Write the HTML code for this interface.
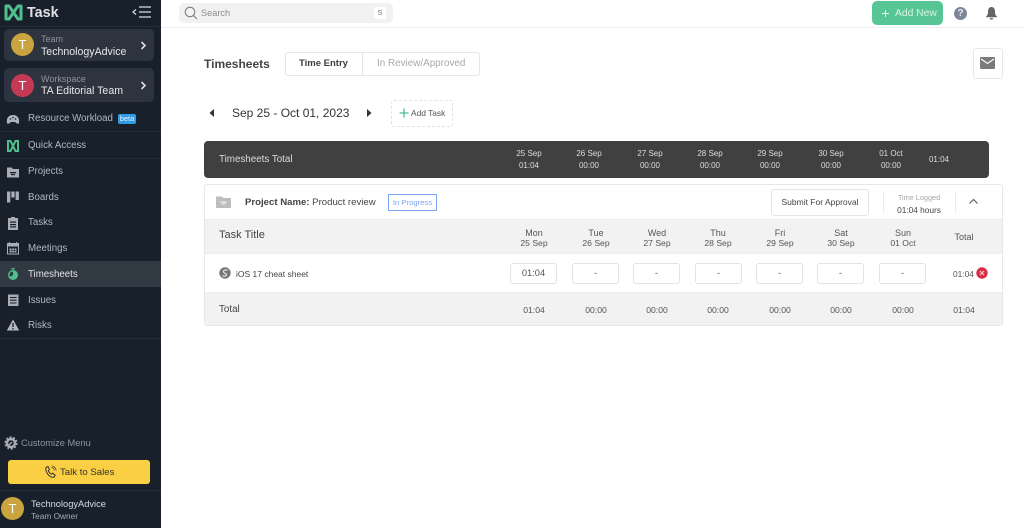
<!DOCTYPE html>
<html lang="en">
<head>
<meta charset="utf-8">
<title>Timesheets</title>
<style>
html,body{margin:0;padding:0}
body{width:1024px;height:528px;overflow:hidden;position:relative;background:#fff;font-family:"Liberation Sans",sans-serif;color:#3c3c3c;filter:blur(.3px)}
.a{position:absolute;white-space:nowrap}
.t{position:absolute;white-space:nowrap;line-height:12px}
.c{position:absolute;white-space:nowrap;transform:translateX(-50%);line-height:12px;text-align:center}
.side{position:absolute;left:0;top:0;width:161px;height:528px;background:#18202c}
.sep{position:absolute;left:0;width:161px;height:1px;background:#232c39}
.box{position:absolute;left:4px;width:150px;background:#2d343f;border-radius:5px}
.av{position:absolute;width:23px;height:23px;border-radius:50%;color:#fff;font-size:13px;line-height:23px;text-align:center}
.m{position:absolute;left:28px;font-size:9.700px;line-height:12px;color:#b3b8bf;white-space:nowrap}
.i{position:absolute;left:6px;width:14px;height:14px}
.inp{position:absolute;top:263px;width:45px;height:19px;border:1px solid #e3e3e3;border-radius:3px;background:#fff;text-align:center;font-size:9px;line-height:19px;color:#555}
.g{background:#f2f2f2;position:absolute;left:205px;width:797px}
.w{color:#ddd;font-size:8px}
.d{font-size:8.600px;color:#555}
svg{display:block}
</style>
</head>
<body>
<div class="side"></div>
<svg class="a" style="left:4px;top:4px" width="19" height="17" viewBox="0 0 19 17"><path d="M2 2h3l9 13h3V2h-3L5 15H2z" fill="none" stroke="#4fc08d" stroke-width="3" stroke-linejoin="round"/></svg>
<div class="t" style="left:27px;top:5px;font-size:14.300px;line-height:17px;font-weight:bold;color:#dfe2e5">Task</div>
<svg class="a" style="left:131px;top:6px" width="21" height="12" viewBox="0 0 21 12"><path d="M5 3.500L2 6l3 2.500" fill="none" stroke="#ddd" stroke-width="1.200"/><path d="M8 1h12M8 6h12M8 11h12" stroke="#ddd" stroke-width="1.200"/></svg>
<div class="sep" style="top:26px"></div>

<div class="box" style="top:29px;height:32px"></div>
<div class="av" style="left:11px;top:33px;background:#c9a43f">T</div>
<div class="t" style="left:41px;top:33px;font-size:9px;color:#8e949c">Team</div>
<div class="t" style="left:41px;top:45.500px;font-size:10.600px;color:#e6e8ea">TechnologyAdvice</div>
<svg class="a" style="left:140px;top:41px" width="7" height="9" viewBox="0 0 7 9"><path d="M1.500 1l3.500 3.500L1.500 8" fill="none" stroke="#ddd" stroke-width="1.600"/></svg>

<div class="box" style="top:68px;height:34px"></div>
<div class="av" style="left:11px;top:74px;background:#c43a55">T</div>
<div class="t" style="left:41px;top:72.500px;font-size:9px;color:#8e949c">Workspace</div>
<div class="t" style="left:41px;top:84.500px;font-size:10.600px;color:#e6e8ea">TA Editorial Team</div>
<svg class="a" style="left:140px;top:81px" width="7" height="9" viewBox="0 0 7 9"><path d="M1.500 1l3.500 3.500L1.500 8" fill="none" stroke="#ddd" stroke-width="1.600"/></svg>

<svg class="i" style="top:112px" viewBox="0 0 14 14"><path d="M1 11C0 6 3 3 7 3s7 3 6 8c-.3 1-1.500 1-2.200.4L9 10H5l-1.800 1.400C2.500 12 1.300 12 1 11z" fill="#aeb3b9"/><circle cx="4.500" cy="7" r=".8" fill="#18202c"/><circle cx="7" cy="5.500" r=".8" fill="#18202c"/><circle cx="9.500" cy="7" r=".8" fill="#18202c"/></svg>
<div class="m" style="top:113px">Resource Workload</div>
<div class="a" style="left:118px;top:114px;width:18px;height:10px;background:#2f9be6;border-radius:2px;color:#e8f4ff;font-size:7.500px;line-height:10px;text-align:center">beta</div>
<div class="sep" style="top:131px"></div>

<svg class="i" style="top:139px" viewBox="0 0 14 14"><path d="M2 2h2.500l5 10H12V2H9.500l-5 10H2z" fill="none" stroke="#4fc08d" stroke-width="2"/></svg>
<div class="m" style="top:140px">Quick Access</div>
<div class="sep" style="top:158px"></div>

<svg class="i" style="top:165px" viewBox="0 0 14 14"><path d="M1 2.500h4.500L7 4h6v8.500H1z" fill="#a9aeb5"/><rect x="4" y="7" width="6" height="1.300" fill="#18202c"/><rect x="5" y="9" width="4" height="1.200" fill="#18202c"/></svg>
<div class="m" style="top:166px">Projects</div>

<svg class="i" style="top:190px" viewBox="0 0 14 14"><rect x="1" y="1.500" width="3.300" height="11" fill="#a9aeb5"/><rect x="5.300" y="1.500" width="3.300" height="6" fill="#a9aeb5"/><rect x="9.600" y="1.500" width="3.300" height="8.500" fill="#a9aeb5"/></svg>
<div class="m" style="top:191.500px">Boards</div>

<svg class="i" style="top:216px" viewBox="0 0 14 14"><path d="M2 2h3V1h4v1h3v12H2z" fill="#a9aeb5"/><rect x="4" y="5.500" width="6" height="1.200" fill="#18202c"/><rect x="4" y="8" width="6" height="1.200" fill="#18202c"/><rect x="4" y="10.300" width="6" height="1.200" fill="#18202c"/></svg>
<div class="m" style="top:217px">Tasks</div>

<svg class="i" style="top:241px" viewBox="0 0 14 14"><path d="M1.500 2.500h11v10.500h-11z" fill="none" stroke="#a9aeb5" stroke-width="1"/><rect x="1.500" y="2.500" width="11" height="3" fill="#a9aeb5"/><path d="M3.500 1v2.500M10.500 1v2.500" stroke="#a9aeb5"/><path d="M3.500 7.500h7v4h-7z" fill="#a9aeb5"/><path d="M3.500 9.500h7M6 7.500v4M8.300 7.500v4" stroke="#18202c" stroke-width=".6"/></svg>
<div class="m" style="top:243px">Meetings</div>

<div class="a" style="left:0;top:261px;width:161px;height:26px;background:#313942"></div>
<svg class="i" style="top:267px" viewBox="0 0 14 14"><circle cx="7" cy="8" r="5" fill="#4fc08d"/><rect x="5.500" y="1" width="3" height="1.500" fill="#4fc08d"/><path d="M7 8V4.500A3.500 3.500 0 0 0 4 9.800z" fill="#2a3a3a"/></svg>
<div class="m" style="top:268.500px;color:#e2e4e7">Timesheets</div>

<svg class="i" style="top:293px" viewBox="0 0 14 14"><rect x="2" y="1.500" width="10.500" height="11.500" fill="#a9aeb5"/><path d="M4 4.500h6.500M4 7.200h6.500M4 10h6.500" stroke="#18202c" stroke-width="1.100"/></svg>
<div class="m" style="top:294.500px">Issues</div>

<svg class="i" style="top:318px" viewBox="0 0 14 14"><path d="M7 1.500l6.200 11H.8z" fill="#b5b9bf"/><rect x="6.300" y="5" width="1.400" height="4" fill="#18202c"/><rect x="6.300" y="10" width="1.400" height="1.400" fill="#18202c"/></svg>
<div class="m" style="top:320px">Risks</div>
<div class="sep" style="top:338px"></div>

<svg class="a" style="left:4px;top:436px" width="14" height="14" viewBox="0 0 14 14"><circle cx="7" cy="7" r="4" fill="none" stroke="#a9aeb5" stroke-width="2.400"/><circle cx="7" cy="7" r="5.700" fill="none" stroke="#a9aeb5" stroke-width="1.800" stroke-dasharray="2 1.600"/><path d="M5 9l3-3" stroke="#a9aeb5" stroke-width="1.300"/></svg>
<div class="t" style="left:21px;top:437px;font-size:9.300px;color:#8f959c">Customize Menu</div>
<div class="a" style="left:8px;top:460px;width:142px;height:24px;background:#fbcf44;border-radius:3px"></div>
<svg class="a" style="left:44px;top:465px" width="13" height="14" viewBox="0 0 13 14"><path d="M2 2.500L4 1.500l1.500 3-1.200 1c.5 1.500 1.700 3 3.200 3.700l1.200-1 2.500 2-1.200 2C6 13 1 7.500 2 2.500z" fill="none" stroke="#333" stroke-width="1"/><path d="M7.500 2.500a3.500 3.500 0 0 1 3 3M7.500.8a5 5 0 0 1 4.700 4.700" fill="none" stroke="#333" stroke-width=".7"/></svg>
<div class="t" style="left:60px;top:466.500px;font-size:9.600px;color:#333">Talk to Sales</div>
<div class="sep" style="top:490px"></div>
<div class="av" style="left:1px;top:497px;background:#c9a43f">T</div>
<div class="t" style="left:31px;top:498px;font-size:9.300px;color:#d9dce0">TechnologyAdvice</div>
<div class="t" style="left:31px;top:510px;font-size:8.300px;color:#a5aab1">Team Owner</div>

<div class="a" style="left:161px;top:27px;width:863px;height:1px;background:#efefef"></div>
<div class="a" style="left:179px;top:3px;width:214px;height:20px;background:#f1f1f1;border-radius:5px"></div>
<svg class="a" style="left:184px;top:6px" width="14" height="14" viewBox="0 0 14 14"><circle cx="6" cy="6" r="4.800" fill="none" stroke="#6f7883" stroke-width="1"/><path d="M9.500 9.500l3.500 3.500" stroke="#6f7883" stroke-width="1"/></svg>
<div class="t" style="left:201px;top:7px;font-size:9.200px;color:#8e8e8e">Search</div>
<div class="a" style="left:374px;top:7px;width:12px;height:12px;background:#fff;border-radius:2px;font-size:7.500px;line-height:12px;text-align:center;color:#777">S</div>

<div class="a" style="left:872px;top:1px;width:71px;height:24px;background:#57c594;border-radius:5px"></div>
<svg class="a" style="left:881px;top:9px" width="9" height="9" viewBox="0 0 9 9"><path d="M4.500 1v7M1 4.500h7" stroke="#e8f8f0" stroke-width="1"/></svg>
<div class="t" style="left:895px;top:7.500px;font-size:10.300px;color:#d9f3e6">Add New</div>
<div class="a" style="left:954px;top:7px;width:13px;height:13px;border-radius:50%;background:#7d8896;color:#e8eaed;font-size:10px;font-weight:bold;line-height:13px;text-align:center">?</div>
<svg class="a" style="left:985px;top:6px" width="13" height="14" viewBox="0 0 13 14"><path d="M6.500 1C4 1 3 3 3 5.500 3 8 2.500 9.500 1 10.500v.8h11v-.8C10.500 9.500 10 8 10 5.500 10 3 9 1 6.500 1z" fill="#666"/><rect x="5" y="12" width="3" height="1.500" rx=".7" fill="#666"/></svg>

<div class="a" style="left:973px;top:48px;width:28px;height:29px;border:1px solid #e8e8e8;border-radius:3px"></div>
<svg class="a" style="left:980px;top:57px" width="15" height="12" viewBox="0 0 15 12"><rect width="15" height="12" rx="1" fill="#7b7b7b"/><path d="M1 2l6.500 4.500L14 2" fill="none" stroke="#fff" stroke-width="1.100"/></svg>

<div class="t" style="left:204px;top:58px;font-size:12px;line-height:13px;font-weight:bold;color:#444">Timesheets</div>
<div class="a" style="left:285px;top:52px;width:193px;height:22px;border:1px solid #e6e6e6;border-radius:3px"></div>
<div class="a" style="left:362px;top:53px;width:1px;height:22px;background:#e6e6e6"></div>
<div class="t" style="left:299px;top:57.500px;font-size:9.500px;font-weight:bold;color:#3c3c3c">Time Entry</div>
<div class="t" style="left:377px;top:57.500px;font-size:9.900px;color:#a8a8a8">In Review/Approved</div>

<svg class="a" style="left:209px;top:109px" width="6" height="8" viewBox="0 0 6 8"><path d="M5 0v8L.5 4z" fill="#333"/></svg>
<div class="t" style="left:232px;top:106px;font-size:12px;line-height:14px;color:#333">Sep 25 - Oct 01, 2023</div>
<svg class="a" style="left:366px;top:109px" width="6" height="8" viewBox="0 0 6 8"><path d="M1 0v8l4.500-4z" fill="#333"/></svg>
<div class="a" style="left:391px;top:100px;width:60px;height:25px;border:1px dashed #e2e2e2;border-radius:3px"></div>
<svg class="a" style="left:399px;top:108px" width="10" height="10" viewBox="0 0 10 10"><path d="M5 .5v9M.5 5h9" stroke="#4fc08d" stroke-width="1.300"/></svg>
<div class="t" style="left:411px;top:107px;font-size:8.400px;color:#555">Add Task</div>

<div class="a" style="left:204px;top:141px;width:785px;height:37px;background:#404040;border-radius:4px"></div>
<div class="t" style="left:219px;top:154px;font-size:9.800px;color:#dcdcdc">Timesheets Total</div>
<div class="c w" style="left:529px;top:148px">25 Sep</div><div class="c w" style="left:529px;top:159.500px">01:04</div>
<div class="c w" style="left:589px;top:148px">26 Sep</div><div class="c w" style="left:589px;top:159.500px">00:00</div>
<div class="c w" style="left:650px;top:148px">27 Sep</div><div class="c w" style="left:650px;top:159.500px">00:00</div>
<div class="c w" style="left:710px;top:148px">28 Sep</div><div class="c w" style="left:710px;top:159.500px">00:00</div>
<div class="c w" style="left:770px;top:148px">29 Sep</div><div class="c w" style="left:770px;top:159.500px">00:00</div>
<div class="c w" style="left:831px;top:148px">30 Sep</div><div class="c w" style="left:831px;top:159.500px">00:00</div>
<div class="c w" style="left:891px;top:148px">01 Oct</div><div class="c w" style="left:891px;top:159.500px">00:00</div>
<div class="c w" style="left:939px;top:154px">01:04</div>

<div class="g" style="top:219px;height:34px"></div>
<div class="a" style="left:205px;top:219px;width:797px;height:1px;background:#ebebeb"></div>
<div class="a" style="left:205px;top:253px;width:797px;height:1px;background:#ebebeb"></div>
<div class="g" style="top:293px;height:32px;border-radius:0 0 3px 3px"></div>
<div class="a" style="left:205px;top:292px;width:797px;height:1px;background:#ebebeb"></div>
<div class="a" style="left:204px;top:184px;width:797px;height:139.500px;border:1px solid #e8e8e8;border-radius:3px"></div>

<svg class="a" style="left:216px;top:195px" width="15" height="13" viewBox="0 0 15 13"><path d="M0 1.500h6L7.500 3H15v10H0z" fill="#bdbdbd"/><rect x="4.500" y="6.500" width="6" height="1.200" fill="#f4f4f4"/><rect x="5.500" y="8.500" width="4" height="1" fill="#f4f4f4"/></svg>
<div class="t" style="left:245px;top:196.500px;font-size:9.600px;color:#444"><b>Project Name:</b> Product review</div>
<div class="a" style="left:388px;top:194px;width:47px;height:15px;border:1px solid #7da4f5;font-size:7.700px;line-height:15px;text-align:center;color:#7da4f5">In Progress</div>
<div class="a" style="left:771px;top:189px;width:96px;height:25px;border:1px solid #e6e6e6;border-radius:3px;font-size:8.500px;line-height:25px;text-align:center;color:#444">Submit For Approval</div>
<div class="a" style="left:883px;top:191px;width:1px;height:22px;background:#ececec"></div>
<div class="c" style="left:919px;top:192px;font-size:7.300px;color:#a5a5a5">Time Logged</div>
<div class="c" style="left:919px;top:203.500px;font-size:8.300px;color:#444">01:04 hours</div>
<div class="a" style="left:955px;top:191px;width:1px;height:22px;background:#ececec"></div>
<svg class="a" style="left:968px;top:198px" width="11" height="7" viewBox="0 0 11 7"><path d="M1.500 5.500l4-4 4 4" fill="none" stroke="#555" stroke-width="1.100"/></svg>

<div class="t" style="left:219px;top:228.500px;font-size:11px;color:#444">Task Title</div>
<div class="c d" style="left:534px;top:226.500px;font-size:9px">Mon</div><div class="c d" style="left:534px;top:237px">25 Sep</div>
<div class="c d" style="left:596px;top:226.500px;font-size:9px">Tue</div><div class="c d" style="left:596px;top:237px">26 Sep</div>
<div class="c d" style="left:657px;top:226.500px;font-size:9px">Wed</div><div class="c d" style="left:657px;top:237px">27 Sep</div>
<div class="c d" style="left:718px;top:226.500px;font-size:9px">Thu</div><div class="c d" style="left:718px;top:237px">28 Sep</div>
<div class="c d" style="left:780px;top:226.500px;font-size:9px">Fri</div><div class="c d" style="left:780px;top:237px">29 Sep</div>
<div class="c d" style="left:841px;top:226.500px;font-size:9px">Sat</div><div class="c d" style="left:841px;top:237px">30 Sep</div>
<div class="c d" style="left:903px;top:226.500px;font-size:9px">Sun</div><div class="c d" style="left:903px;top:237px">01 Oct</div>
<div class="c" style="left:964px;top:231px;font-size:9px;color:#555">Total</div>

<svg class="a" style="left:219px;top:267px" width="12" height="12" viewBox="0 0 12 12"><circle cx="6" cy="6" r="5.700" fill="#777"/><path d="M8.500 3.200C6 2.500 4 3.500 4.500 5S8 6.500 7.500 8 5 9.500 3.500 8.800" fill="none" stroke="#eee" stroke-width="1.100"/></svg>
<div class="t" style="left:236px;top:268px;font-size:8.500px;color:#444">iOS 17 cheat sheet</div>
<div class="inp" style="left:510px;font-size:9.300px">01:04</div>
<div class="inp" style="left:572px">-</div>
<div class="inp" style="left:633px">-</div>
<div class="inp" style="left:695px">-</div>
<div class="inp" style="left:756px">-</div>
<div class="inp" style="left:817px">-</div>
<div class="inp" style="left:879px">-</div>
<div class="t" style="left:953px;top:268px;font-size:8.400px;color:#555">01:04</div>
<svg class="a" style="left:976px;top:267px" width="12" height="12" viewBox="0 0 12 12"><circle cx="6" cy="6" r="5.700" fill="#dc2f45"/><path d="M4 4l4 4M8 4l-4 4" stroke="#f7d5da" stroke-width="1"/></svg>

<div class="t" style="left:219px;top:303.500px;font-size:9.800px;color:#444">Total</div>
<div class="c d" style="left:534px;top:303.500px">01:04</div>
<div class="c d" style="left:596px;top:303.500px">00:00</div>
<div class="c d" style="left:657px;top:303.500px">00:00</div>
<div class="c d" style="left:718px;top:303.500px">00:00</div>
<div class="c d" style="left:780px;top:303.500px">00:00</div>
<div class="c d" style="left:841px;top:303.500px">00:00</div>
<div class="c d" style="left:903px;top:303.500px">00:00</div>
<div class="c d" style="left:964px;top:303.500px">01:04</div>
</body>
</html>
